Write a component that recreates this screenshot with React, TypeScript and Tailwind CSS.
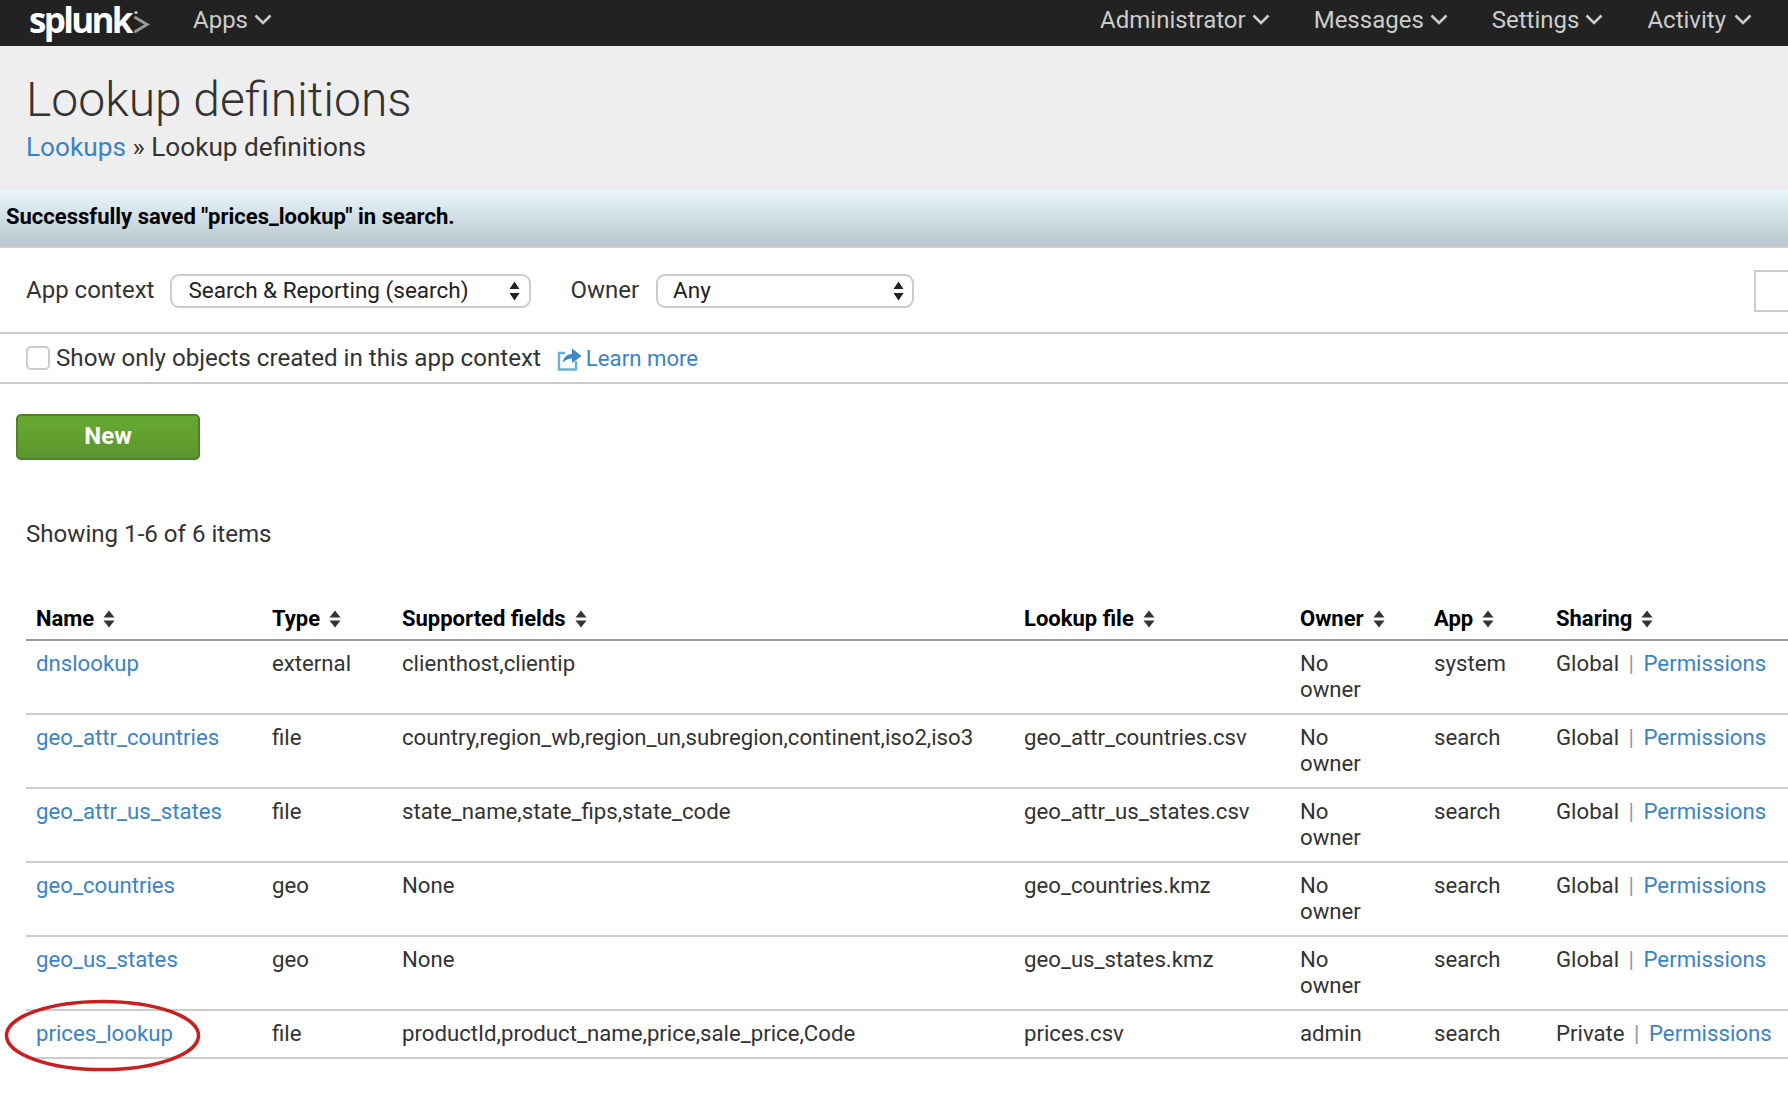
import React from "react";

const SANS = "font-['Roboto',sans-serif]";

interface LookupRow {
  name: string;
  type: string;
  fields: string;
  file: string;
  owner: string;
  app: string;
  sharing: string;
}

const ROWS: LookupRow[] = [
  { name: "dnslookup", type: "external", fields: "clienthost,clientip", file: "", owner: "No owner", app: "system", sharing: "Global" },
  { name: "geo_attr_countries", type: "file", fields: "country,region_wb,region_un,subregion,continent,iso2,iso3", file: "geo_attr_countries.csv", owner: "No owner", app: "search", sharing: "Global" },
  { name: "geo_attr_us_states", type: "file", fields: "state_name,state_fips,state_code", file: "geo_attr_us_states.csv", owner: "No owner", app: "search", sharing: "Global" },
  { name: "geo_countries", type: "geo", fields: "None", file: "geo_countries.kmz", owner: "No owner", app: "search", sharing: "Global" },
  { name: "geo_us_states", type: "geo", fields: "None", file: "geo_us_states.kmz", owner: "No owner", app: "search", sharing: "Global" },
  { name: "prices_lookup", type: "file", fields: "productId,product_name,price,sale_price,Code", file: "prices.csv", owner: "admin", app: "search", sharing: "Private" },
];

const COLUMNS = ["Name", "Type", "Supported fields", "Lookup file", "Owner", "App", "Sharing"];

const Chevron = () => (
  <svg width="18" height="12" viewBox="0 0 18 12" fill="none" className="ml-[6px] mt-[1px]">
    <path d="M1.5 1.5 9 9 16.5 1.5" stroke="#cccccc" strokeWidth="2.6" />
  </svg>
);

const SortIcon = () => (
  <svg width="12" height="18" viewBox="0 0 12 18" className="ml-[9px]">
    <path d="M6 0.5 11.5 7.5H0.5Z M6 17.5 0.5 10.5H11.5Z" fill="#333333" />
  </svg>
);

const SelectArrows = () => (
  <svg width="11" height="20" viewBox="0 0 11 20">
    <path d="M5.5 0.5 10.5 8H0.5Z M5.5 19.5 0.5 12H10.5Z" fill="#222222" />
  </svg>
);

const NavItem = ({ label }: { label: string }) => (
  <a className="flex items-center text-[24px] text-[#cccccc]">
    {label}
    <Chevron />
  </a>
);

const App = () => {
  return (
    <div className={`${SANS} h-[1100px] w-[1788px] overflow-hidden bg-white text-[#333333]`}>
      <nav className="flex h-[46px] items-center justify-between bg-[#222222] pb-[7px] pl-[29px] pr-[36px]">
        <div className="flex items-center">
          <div className="flex w-[164px] items-center">
            <span className="font-['Open_Sans',sans-serif] text-[35px] leading-[38px] font-bold tracking-[-2.7px] text-white">splunk</span>
            <svg width="17" height="26" viewBox="0 0 17 26" fill="none" className="ml-[2px] mt-[6px]">
              <path d="M1.5 7 14 14.5 1.5 22" stroke="#999999" strokeWidth="3" />
              <circle cx="3" cy="2.5" r="1.6" fill="#cccccc" />
            </svg>
          </div>
          <NavItem label="Apps" />
        </div>
        <div className="flex items-center gap-[44px] [&>a:last-child>svg]:ml-[8px]">
          {["Administrator", "Messages", "Settings", "Activity"].map((label) => (
            <NavItem key={label} label={label} />
          ))}
        </div>
      </nav>

      <header className="h-[144px] bg-[#eeeeee] pl-[26px] pt-[26px]">
        <h1 className="text-[48px] leading-[56px] font-light">Lookup definitions</h1>
        <div className="mt-[3px] text-[26.2px] leading-[32px]">
          <a className="text-[#3c83c5]">Lookups</a> » Lookup definitions
        </div>
      </header>

      <div className="flex h-[58px] items-center border-b-2 border-[#cccccc] bg-gradient-to-b from-[#eaf6fc] to-[#b9c6ce] pb-[4px] pl-[6px] text-[22px] font-bold text-black">
        Successfully saved "prices_lookup" in search.
      </div>

      <div className="flex h-[86px] items-center border-b-2 border-[#cccccc] pl-[26px] text-[24px]">
        <span>App context</span>
        <div className="ml-[16px] mt-[1px] flex h-[34px] w-[361px] items-center justify-between rounded-[9px] border-2 border-[#cccccc] pl-[16px] pr-[9px] text-[22.5px] text-[#222222]">
          Search &amp; Reporting (search)
          <SelectArrows />
        </div>
        <span className="ml-[39px]">Owner</span>
        <div className="ml-[17px] mt-[1px] flex h-[34px] w-[258px] items-center justify-between rounded-[9px] border-2 border-[#cccccc] pl-[15px] pr-[8px] text-[22.5px] text-[#222222]">
          Any
          <SelectArrows />
        </div>
        <div className="ml-auto mt-[2px] h-[42px] w-[34px] border-2 border-r-0 border-[#cccccc]" />
      </div>

      <div className="flex h-[50px] items-center border-b-2 border-[#cccccc] pl-[26px] text-[24.15px]">
        <span className="h-[24px] w-[24px] rounded-[5px] border-2 border-[#cccccc] bg-white" />
        <span className="ml-[6px] pt-[1px]">Show only objects created in this app context</span>
        <svg width="25" height="24" viewBox="0 0 25 24" fill="none" className="ml-[16px] mt-[2px]">
          <path d="M8 6H2V22.5H19V14" stroke="#6aaedb" strokeWidth="2.4" />
          <path d="M5.5 16C6.5 10 10.5 7 15 7V1.5L24.5 9 15 16V11.5C11 11.5 8 13 5.5 16Z" fill="#3c88c8" />
        </svg>
        <a className="ml-[4px] pt-[1px] text-[22.2px] text-[#3c83c5]">Learn more</a>
      </div>

      <div className="pl-[16px] pt-[30px]">
        <button className="h-[46px] w-[184px] rounded-[5px] border-2 border-[#4f7f2c] bg-gradient-to-b from-[#67a932] to-[#5b962c] pb-[2px] text-[24px] font-bold text-white">
          New
        </button>
      </div>

      <div className="mt-[59px] pl-[26px] text-[24.1px] leading-[30px]">Showing 1-6 of 6 items</div>

      <table className="mt-[51px] ml-[26px] w-[1762px] table-fixed border-collapse text-[22.2px] leading-[26px]">
        <colgroup>
          <col className="w-[236px]" />
          <col className="w-[130px]" />
          <col className="w-[622px]" />
          <col className="w-[276px]" />
          <col className="w-[134px]" />
          <col className="w-[122px]" />
          <col />
        </colgroup>
        <thead>
          <tr className="border-b-2 border-[#999999]">
            {COLUMNS.map((column) => (
              <th key={column} className="h-[40px] px-[10px] pb-[1px] text-left text-[22px] font-bold text-black">
                <span className="flex items-center">
                  {column}
                  <SortIcon />
                </span>
              </th>
            ))}
          </tr>
        </thead>
        <tbody>
          {ROWS.map((row) => (
            <tr key={row.name} className="border-b-2 border-[#cccccc]">
              <td className="relative px-[10px] pb-[11px] pt-[9px] align-top">
                <a className="text-[#3c83c5]">{row.name}</a>
                {row.name === "prices_lookup" && (
                  <svg width="197" height="73" viewBox="0 0 197 73" fill="none" className="absolute left-[-22px] top-[-12px]">
                    <ellipse cx="98.5" cy="36.5" rx="96" ry="34" stroke="#c82020" strokeWidth="3.5" />
                  </svg>
                )}
              </td>
              <td className="px-[10px] pb-[11px] pt-[9px] align-top">{row.type}</td>
              <td className="px-[10px] pb-[11px] pt-[9px] align-top">{row.fields}</td>
              <td className="px-[10px] pb-[11px] pt-[9px] align-top">{row.file}</td>
              <td className="px-[10px] pb-[11px] pt-[9px] align-top">
                <span className="block w-min">{row.owner}</span>
              </td>
              <td className="px-[10px] pb-[11px] pt-[9px] align-top">{row.app}</td>
              <td className="whitespace-nowrap px-[10px] pb-[11px] pt-[9px] align-top">
                {row.sharing}
                <span className="mx-[9.5px] text-[#999999]">|</span>
                <a className="text-[#3c83c5]">Permissions</a>
              </td>
            </tr>
          ))}
        </tbody>
      </table>
    </div>
  );
};

export default App;
